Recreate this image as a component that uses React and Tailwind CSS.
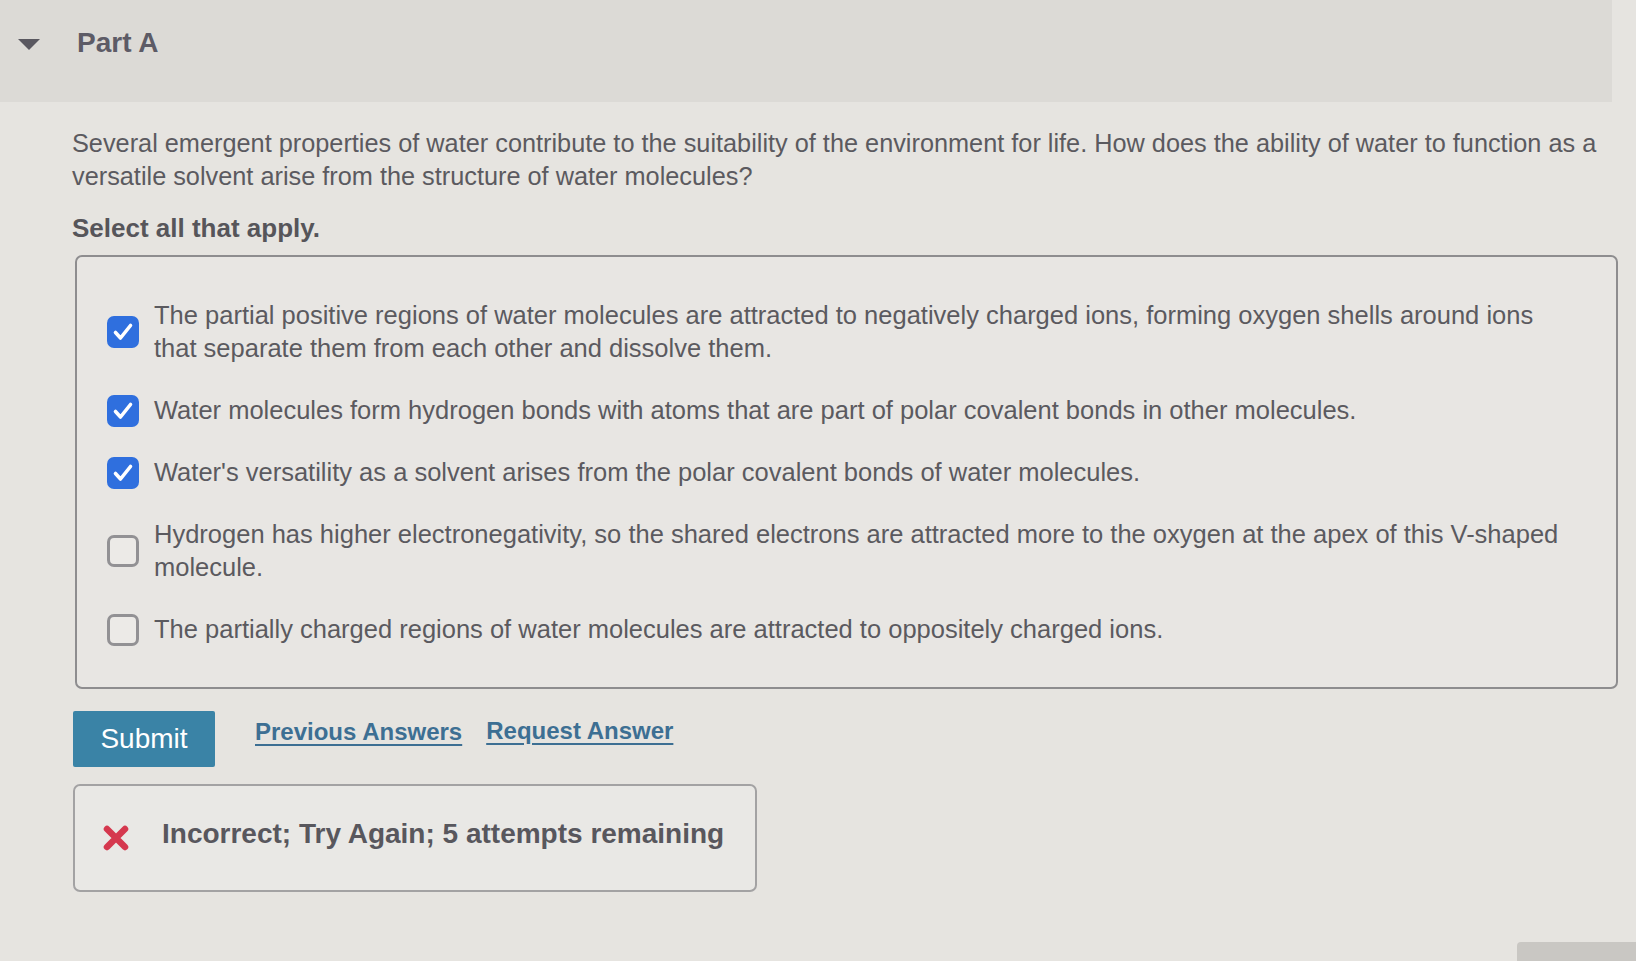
import React from "react";

const font = { fontFamily: '"Liberation Sans", Arial, Helvetica, sans-serif' };

function Check({ checked }) {
  if (checked) {
    return (
      <div className="w-[32px] h-[32px] shrink-0 rounded-[7px] bg-[#2f6fde] flex items-center justify-center">
        <svg width="24" height="24" viewBox="0 0 24 24" fill="none">
          <path d="M4.5 12.5l5 5.5L19.5 5.5" stroke="#ffffff" strokeWidth="3.6" strokeLinecap="round" strokeLinejoin="round" />
        </svg>
      </div>
    );
  }
  return <div className="w-[32px] h-[32px] shrink-0 rounded-[7px] border-[3px] border-[#929194] bg-[#eceae7]" />;
}

const options = [
  {
    checked: true,
    lines: [
      "The partial positive regions of water molecules are attracted to negatively charged ions, forming oxygen shells around ions",
      "that separate them from each other and dissolve them.",
    ],
  },
  { checked: true, lines: ["Water molecules form hydrogen bonds with atoms that are part of polar covalent bonds in other molecules."] },
  { checked: true, lines: ["Water's versatility as a solvent arises from the polar covalent bonds of water molecules."] },
  {
    checked: false,
    lines: [
      "Hydrogen has higher electronegativity, so the shared electrons are attracted more to the oxygen at the apex of this V-shaped",
      "molecule.",
    ],
  },
  { checked: false, lines: ["The partially charged regions of water molecules are attracted to oppositely charged ions."] },
];

export default function App() {
  return (
    <div style={font} className="relative w-[1636px] h-[961px] overflow-hidden bg-[#e6e4e0] text-[#5b5a5f]">
      <div className="w-[1612px] h-[102px] bg-[#dcdad6] flex items-center">
        <svg width="22" height="11" viewBox="0 0 22 11" className="ml-[18px] mt-[-14px]">
          <path d="M0 0 H22 L11 11 Z" fill="#5a5860" />
        </svg>
        <div className="ml-[37px] mt-[-16px] text-[28px] font-bold text-[#5d5b66]">Part A</div>
      </div>

      <div className="pl-[72px] pr-[20px]">
        <div className="mt-[25px] text-[25.3px] leading-[33px]">
          <div className="whitespace-nowrap">
            Several emergent properties of water contribute to the suitability of the environment for life. How does the ability of water to function as a
          </div>
          <div className="whitespace-nowrap">versatile solvent arise from the structure of water molecules?</div>
        </div>
        <p className="mt-[19px] text-[26px] leading-[33px] font-bold text-[#56555a]">Select all that apply.</p>

        <div className="mt-[10px] ml-[3px] w-[1543px] rounded-[7px] border-2 border-[#8e8d8f] bg-[#e8e6e3] pl-[30px] pt-[42px] pb-[41px] flex flex-col gap-[29px]">
          {options.map((o, i) => (
            <div key={i} className="flex items-center gap-[15px]">
              <Check checked={o.checked} />
              <div className="text-[25.5px] leading-[33px]">
                {o.lines.map((l, j) => (
                  <div key={j} className="whitespace-nowrap">
                    {l}
                  </div>
                ))}
              </div>
            </div>
          ))}
        </div>

        <div className="mt-[22px] ml-[1px] flex items-center">
          <div className="w-[142px] h-[56px] rounded-[2px] bg-[#3a83a6] text-white text-[28px] flex items-center justify-center">
            Submit
          </div>
          <a className="ml-[40px] mt-[-14px] text-[24px] font-bold text-[#3d6f93] underline underline-offset-[4px]">Previous Answers</a>
          <a className="ml-[24px] mt-[-16px] text-[24px] font-bold text-[#3d6f93] underline underline-offset-[4px]">Request Answer</a>
        </div>

        <div className="mt-[17px] ml-[1px] w-[684px] h-[108px] rounded-[7px] border-2 border-[#a3a2a3] bg-[#e9e8e5] flex items-center">
          <svg width="28" height="28" viewBox="0 0 28 28" className="ml-[27px]">
            <path d="M5 5 L23 23 M23 5 L5 23" stroke="#d5384e" strokeWidth="6.5" strokeLinecap="round" />
          </svg>
          <div className="ml-[32px] mt-[-8px] text-[28px] font-bold text-[#58575d] whitespace-nowrap">Incorrect; Try Again; 5 attempts remaining</div>
        </div>
      </div>

      <div className="absolute left-[1517px] top-[942px] w-[140px] h-[40px] rounded-tl-[4px] bg-[#c9c7c3] pl-[30px] pt-[12px] text-[22px] font-bold text-[#3f3e44]">
        Next ❯
      </div>
    </div>
  );
}
